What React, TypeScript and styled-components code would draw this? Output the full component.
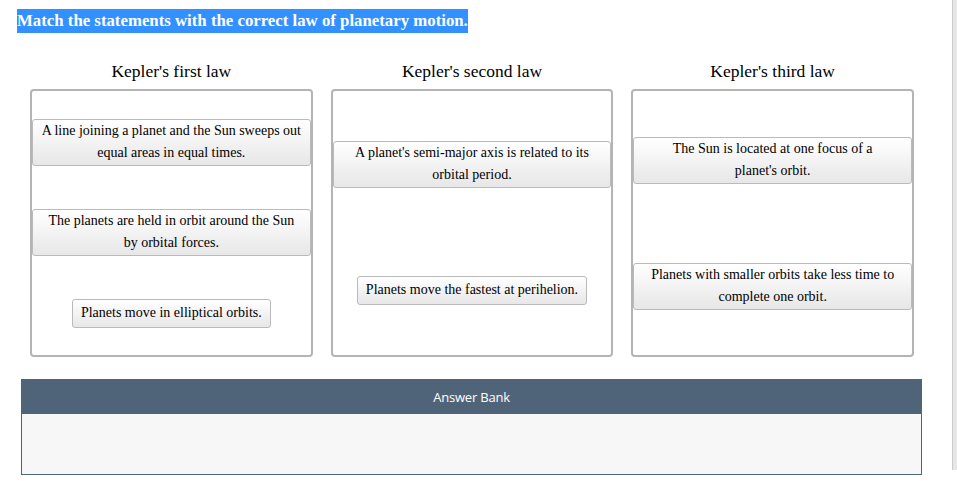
import React from "react";
import styled, { createGlobalStyle } from "styled-components";

const GlobalStyle = createGlobalStyle`
  html, body {
    margin: 0;
    padding: 0;
    background: #fff;
  }
  body {
    font-family: "Liberation Serif", "Times New Roman", serif;
    color: #000;
  }
`;

const Page = styled.div`
  display: flex;
  width: 957px;
  height: 481px;
  overflow: hidden;
`;

const Main = styled.div`
  flex: 1;
  padding: 9px 0 0 17px;
`;

const ScrollEdge = styled.div`
  width: 4px;
  height: 470px;
  background: #e6e6e6;
  border-left: 1px solid #cbcbcb;
`;

const Prompt = styled.div`
  height: 24px;
`;

const Highlight = styled.span`
  display: inline-block;
  background: #3391ff;
  color: #fff;
  font-weight: 700;
  font-size: 16.8px;
  line-height: 24px;
`;

const Exercise = styled.div`
  width: 901px;
  margin: 26px 0 0 4px;
`;

const Columns = styled.div`
  display: grid;
  grid-template-columns: repeat(3, 1fr);
  column-gap: 18px;
  padding: 0 8px 0 9px;
`;

const Column = styled.div`
  display: flex;
  flex-direction: column;
`;

const Heading = styled.div`
  text-align: center;
  font-size: 17.5px;
  line-height: 24px;
  height: 24px;
  margin-bottom: 6px;
`;

const DropZone = styled.div`
  height: 268px;
  box-sizing: border-box;
  border: 2px solid #b4b4b4;
  border-radius: 4px;
  padding: 6px 0;
  display: flex;
  flex-direction: column;
  justify-content: space-around;
  align-items: center;
`;

const Card = styled.div<{ $wide?: boolean }>`
  box-sizing: border-box;
  width: ${(p) => (p.$wide ? "100%" : "auto")};
  max-width: 100%;
  min-height: 29px;
  padding: 0 8px 1px;
  display: flex;
  align-items: center;
  justify-content: center;
  text-align: center;
  white-space: pre-line;
  font-size: 14px;
  line-height: 22px;
  background: linear-gradient(#ffffff, #e7e7e7);
  border: 1px solid #bababa;
  border-radius: 3px;
`;

const Bank = styled.div`
  margin-top: 22px;
`;

const BankHeader = styled.div`
  height: 35px;
  background: #506479;
  color: #fff;
  display: flex;
  align-items: center;
  justify-content: center;
  font-family: "Open Sans", "Liberation Sans", sans-serif;
  font-size: 13px;
  letter-spacing: -0.2px;
`;

const BankBody = styled.div`
  height: 61px;
  box-sizing: border-box;
  background: #f7f7f7;
  border: 1px solid #506479;
  border-top: none;
`;

type Statement = { text: string; wide?: boolean };

const laws: { title: string; cards: Statement[] }[] = [
  {
    title: "Kepler's first law",
    cards: [
      { text: "A line joining a planet and the Sun sweeps out equal areas in equal times.", wide: true },
      { text: "The planets are held in orbit around the Sun by orbital forces.", wide: true },
      { text: "Planets move in elliptical orbits." },
    ],
  },
  {
    title: "Kepler's second law",
    cards: [
      { text: "A planet's semi-major axis is related to its orbital period.", wide: true },
      { text: "Planets move the fastest at perihelion." },
    ],
  },
  {
    title: "Kepler's third law",
    cards: [
      { text: "The Sun is located at one focus of a\nplanet's orbit.", wide: true },
      { text: "Planets with smaller orbits take less time to complete one orbit.", wide: true },
    ],
  },
];

export default function App() {
  return (
    <Page>
      <GlobalStyle />
      <Main>
        <Prompt>
          <Highlight>Match the statements with the correct law of planetary motion.</Highlight>
        </Prompt>
        <Exercise>
          <Columns>
            {laws.map((law) => (
              <Column key={law.title}>
                <Heading>{law.title}</Heading>
                <DropZone>
                  {law.cards.map((c) => (
                    <Card key={c.text} $wide={c.wide}>
                      {c.text}
                    </Card>
                  ))}
                </DropZone>
              </Column>
            ))}
          </Columns>
          <Bank>
            <BankHeader>Answer Bank</BankHeader>
            <BankBody />
          </Bank>
        </Exercise>
      </Main>
      <ScrollEdge />
    </Page>
  );
}
